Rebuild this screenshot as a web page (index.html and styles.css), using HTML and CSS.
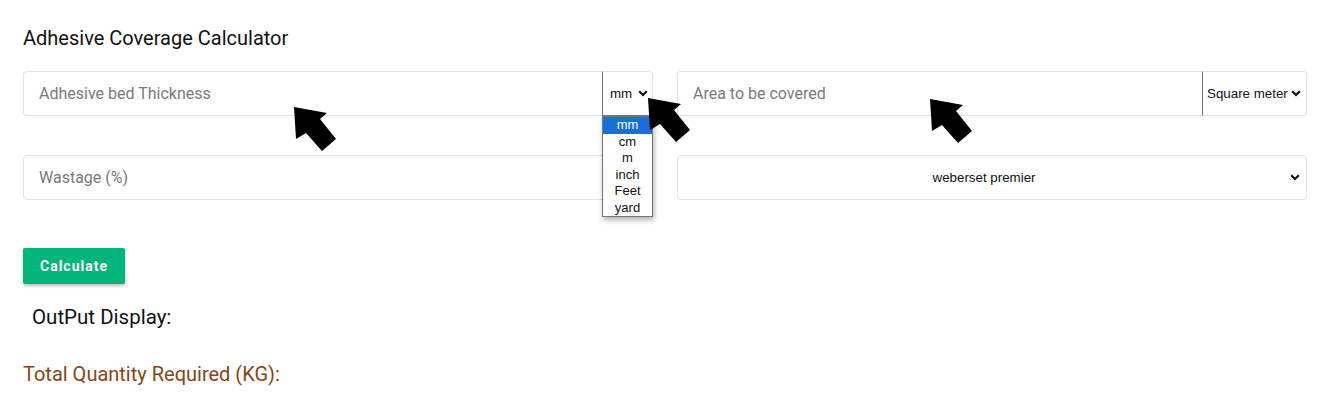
FILE: index.html
```html
<!DOCTYPE html>
<html>
<head>
<meta charset="utf-8">
<link rel="stylesheet" href="styles.css">
</head>
<body>
<div class="page">
  <h1 class="title">Adhesive Coverage Calculator</h1>
  <div class="grid">
    <div class="group">
      <input class="field" type="text" placeholder="Adhesive bed Thickness">
      <div class="unit unit-mm"><span>mm</span><svg class="chev" width="10" height="7" viewBox="0 0 10 7"><path d="M1.2 1.2 L5 5 L8.8 1.2" fill="none" stroke="#111" stroke-width="2.2"/></svg></div>
    </div>
    <div class="group">
      <input class="field" type="text" placeholder="Area to be covered">
      <div class="unit unit-sq"><span>Square meter</span><svg class="chev" width="10" height="7" viewBox="0 0 10 7"><path d="M1.2 1.2 L5 5 L8.8 1.2" fill="none" stroke="#111" stroke-width="2.2"/></svg></div>
    </div>
    <div class="group">
      <input class="field field-full" type="text" placeholder="Wastage (%)">
    </div>
    <div class="group">
      <div class="select-full"><span class="select-text">weberset premier</span><svg class="chev" width="10" height="7" viewBox="0 0 10 7"><path d="M1.2 1.2 L5 5 L8.8 1.2" fill="none" stroke="#111" stroke-width="2.2"/></svg></div>
    </div>
  </div>
  <button class="btn">Calculate</button>
  <div class="output">OutPut Display:</div>
  <div class="total">Total Quantity Required (KG):</div>

  <ul class="dropdown">
    <li class="active">mm</li>
    <li>cm</li>
    <li>m</li>
    <li>inch</li>
    <li>Feet</li>
    <li>yard</li>
  </ul>

  <svg class="arrow arrow-1" width="46" height="48" viewBox="-1 -1 46 48"><polygon points="0,0 33,6 26,12 42,32 28,44 12,26 2,32" fill="#000"/></svg>
  <svg class="arrow arrow-2" width="46" height="48" viewBox="-1 -1 46 48"><polygon points="0,0 33,6 26,12 42,32 28,44 12,26 2,32" fill="#000"/></svg>
  <svg class="arrow arrow-3" width="46" height="48" viewBox="-1 -1 46 48"><polygon points="0,0 33,6 26,12 42,32 28,44 12,26 2,32" fill="#000"/></svg>
</div>
</body>
</html>
```

FILE: styles.css
```css
* { box-sizing: border-box; }
html, body { margin: 0; padding: 0; background: #fff; }
body { font-family: Roboto, "Liberation Sans", Arial, sans-serif; color: #212529; }

.page {
  position: relative;
  width: 1321px;
  height: 413px;
  padding: 26px 14px 0 23px;
}

.title {
  margin: 0 0 21px 0;
  font-size: 20px;
  font-weight: 400;
  line-height: 24px;
  color: #111;
}

.grid {
  display: grid;
  grid-template-columns: 630px 630px;
  column-gap: 24px;
  row-gap: 39px;
}

.group {
  display: flex;
  height: 45px;
}

.field {
  flex: 1;
  min-width: 0;
  height: 45px;
  border: 1px solid #e3e3e3;
  border-right: none;
  border-radius: 4px 0 0 4px;
  padding: 0 15px;
  font-family: Roboto, "Liberation Sans", sans-serif;
  font-size: 16px;
  color: #333;
  outline: none;
  background: #fff;
}
.field::placeholder { color: #7a7a7a; }
.field-full {
  border-right: 1px solid #e3e3e3;
  border-radius: 4px;
}

.unit {
  display: flex;
  align-items: center;
  height: 45px;
  border: 1px solid #e3e3e3;
  border-left: 1px solid #767676;
  border-radius: 0 4px 4px 0;
  font-family: "Liberation Sans", Arial, sans-serif;
  font-size: 13.33px;
  color: #111;
}
.unit-mm { width: 51px; padding-left: 7px; gap: 6px; border-bottom-color: #767676; border-radius: 0 4px 0 0; }
.unit-sq { width: 105px; padding-left: 4px; gap: 3px; }

.chev { flex: none; }

.select-full {
  flex: 1;
  display: flex;
  align-items: center;
  height: 45px;
  border: 1px solid #e3e3e3;
  border-radius: 4px;
  padding: 0 6px 0 0;
  font-family: "Liberation Sans", Arial, sans-serif;
  font-size: 13.33px;
  color: #111;
}
.select-text { flex: 1; text-align: center; }

.btn {
  display: block;
  margin-top: 48px;
  width: 102px;
  height: 36px;
  border: none;
  border-radius: 2px;
  background: #00b67a;
  color: #fff;
  font-family: Roboto, "Liberation Sans", sans-serif;
  font-size: 14px;
  font-weight: 700;
  letter-spacing: 1px;
  box-shadow: 0 2px 3px rgba(0,0,0,0.25);
  padding: 0;
}

.output {
  margin-top: 21px;
  padding-left: 9px;
  font-size: 20.5px;
  line-height: 24px;
  color: #111;
}

.total {
  margin-top: 33px;
  font-size: 20px;
  line-height: 24px;
  color: #8b4513;
}

.dropdown {
  position: absolute;
  left: 602px;
  top: 116px;
  width: 51px;
  margin: 0;
  padding: 0;
  list-style: none;
  border: 1px solid #767676;
  background: #fff;
  box-shadow: 1px 3px 5px rgba(0,0,0,0.3);
  font-family: "Liberation Sans", Arial, sans-serif;
  font-size: 13px;
  color: #111;
}
.dropdown li {
  height: 16.5px;
  line-height: 16.5px;
  text-align: center;
}
.dropdown li.active { background: #1a6ed8; color: #fff; }

.arrow { position: absolute; }
.arrow-1 { left: 293px; top: 106px; }
.arrow-2 { left: 647px; top: 97px; }
.arrow-3 { left: 929px; top: 98px; }
```
